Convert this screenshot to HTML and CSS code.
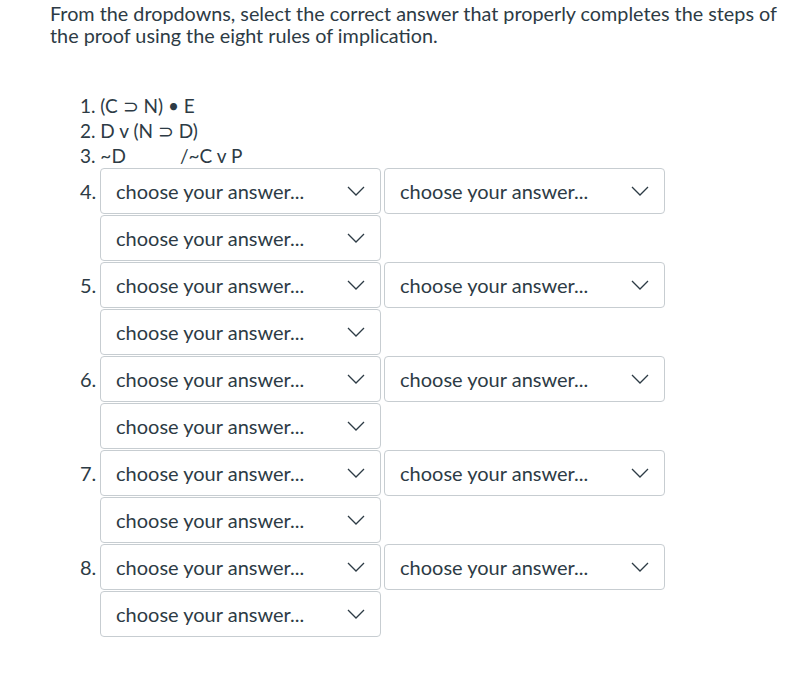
FILE: index.html
```html
<!DOCTYPE html>
<html lang="en">
<head>
<meta charset="utf-8">
<title>Proof</title>
<link rel="stylesheet" href="styles.css">
</head>
<body>
<div class="page">
  <p class="prompt">From the dropdowns, select the correct answer that properly completes the steps of the proof using the eight rules of implication.</p>
  <div class="premises">
    <div class="line">1. (C ⊃ N) • E</div>
    <div class="line">2. D v (N ⊃ D)</div>
    <div class="line"><span class="prem">3. ~D</span><span>/~C v P</span></div>
  </div>
  <div class="steps">
    <div class="step">
      <div class="num">4.</div>
      <div class="stack">
        <div class="select"><span>choose your answer...</span><svg class="chev" viewBox="0 0 18 10"><path d="M1 1 L9 9 L17 1"/></svg></div>
        <div class="select"><span>choose your answer...</span><svg class="chev" viewBox="0 0 18 10"><path d="M1 1 L9 9 L17 1"/></svg></div>
      </div>
      <div class="select side"><span>choose your answer...</span><svg class="chev" viewBox="0 0 18 10"><path d="M1 1 L9 9 L17 1"/></svg></div>
    </div>
    <div class="step">
      <div class="num">5.</div>
      <div class="stack">
        <div class="select"><span>choose your answer...</span><svg class="chev" viewBox="0 0 18 10"><path d="M1 1 L9 9 L17 1"/></svg></div>
        <div class="select"><span>choose your answer...</span><svg class="chev" viewBox="0 0 18 10"><path d="M1 1 L9 9 L17 1"/></svg></div>
      </div>
      <div class="select side"><span>choose your answer...</span><svg class="chev" viewBox="0 0 18 10"><path d="M1 1 L9 9 L17 1"/></svg></div>
    </div>
    <div class="step">
      <div class="num">6.</div>
      <div class="stack">
        <div class="select"><span>choose your answer...</span><svg class="chev" viewBox="0 0 18 10"><path d="M1 1 L9 9 L17 1"/></svg></div>
        <div class="select"><span>choose your answer...</span><svg class="chev" viewBox="0 0 18 10"><path d="M1 1 L9 9 L17 1"/></svg></div>
      </div>
      <div class="select side"><span>choose your answer...</span><svg class="chev" viewBox="0 0 18 10"><path d="M1 1 L9 9 L17 1"/></svg></div>
    </div>
    <div class="step">
      <div class="num">7.</div>
      <div class="stack">
        <div class="select"><span>choose your answer...</span><svg class="chev" viewBox="0 0 18 10"><path d="M1 1 L9 9 L17 1"/></svg></div>
        <div class="select"><span>choose your answer...</span><svg class="chev" viewBox="0 0 18 10"><path d="M1 1 L9 9 L17 1"/></svg></div>
      </div>
      <div class="select side"><span>choose your answer...</span><svg class="chev" viewBox="0 0 18 10"><path d="M1 1 L9 9 L17 1"/></svg></div>
    </div>
    <div class="step">
      <div class="num">8.</div>
      <div class="stack">
        <div class="select"><span>choose your answer...</span><svg class="chev" viewBox="0 0 18 10"><path d="M1 1 L9 9 L17 1"/></svg></div>
        <div class="select"><span>choose your answer...</span><svg class="chev" viewBox="0 0 18 10"><path d="M1 1 L9 9 L17 1"/></svg></div>
      </div>
      <div class="select side"><span>choose your answer...</span><svg class="chev" viewBox="0 0 18 10"><path d="M1 1 L9 9 L17 1"/></svg></div>
    </div>
  </div>
</div>
</body>
</html>
```

FILE: styles.css
```css
html, body {
  margin: 0;
  padding: 0;
  background: #ffffff;
}

body {
  font-family: Lato, "Open Sans", sans-serif;
  color: #2d3b45;
}

.page {
  padding: 2px 0 0 50px;
}

.prompt {
  margin: 0;
  font-size: 19.8px;
  line-height: 22px;
}

.premises {
  margin-top: 47px;
  padding-left: 30px;
  font-size: 19px;
  line-height: 25px;
}

.prem {
  display: inline-block;
  width: 100px;
}

.steps {
  padding-left: 30px;
  display: flex;
  flex-direction: column;
  gap: 1px;
}

.step {
  display: grid;
  grid-template-columns: 20px 281px 284px;
  align-items: start;
}

.num {
  font-size: 20px;
  height: 46px;
  display: flex;
  align-items: center;
}

.stack {
  display: flex;
  flex-direction: column;
  gap: 1px;
}

.select {
  box-sizing: border-box;
  height: 46px;
  border: 1px solid #c7cdd1;
  border-radius: 4px;
  padding: 0 15px 0 15px;
  display: flex;
  align-items: center;
  justify-content: space-between;
  font-size: 20px;
}

.side {
  margin-left: 3px;
}

.chev {
  width: 18px;
  height: 10px;
  fill: none;
  stroke: #2d3b45;
  stroke-width: 1.3;
}
```
